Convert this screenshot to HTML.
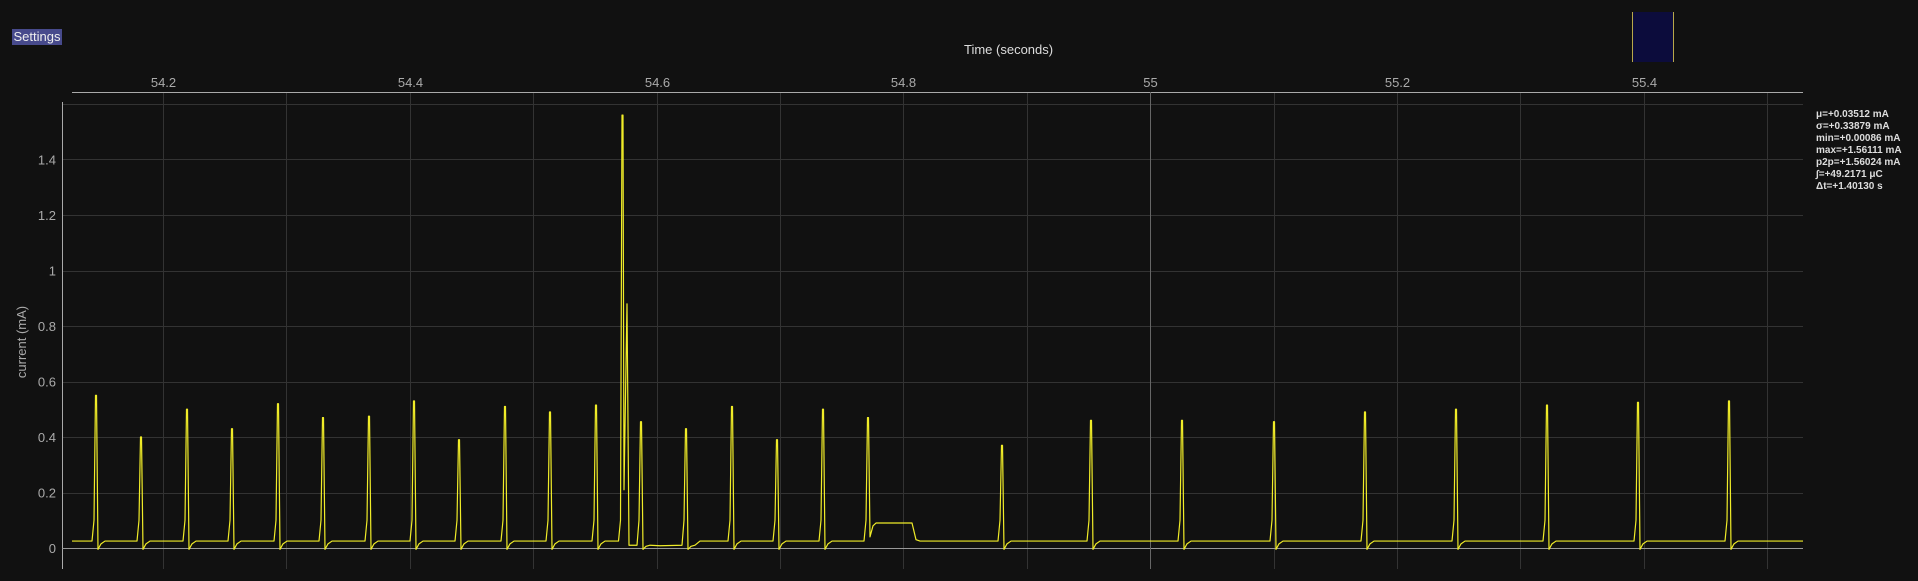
<!DOCTYPE html>
<html><head><meta charset="utf-8"><style>
html,body{margin:0;padding:0;background:#111;width:1918px;height:581px;overflow:hidden;font-family:"Liberation Sans",sans-serif}
.t{position:absolute;color:#bbb;font-size:13px}
</style></head><body>
<div style="position:absolute;left:12px;top:29px;width:50px;height:16px;background:#474a8c;color:#eee;font-size:13px;line-height:16px;text-align:center">Settings</div>
<div style="position:absolute;left:1632px;top:12px;width:40px;height:50px;background:#0c0c3c;border-left:1px solid #b8a84a;border-right:1px solid #b8a84a"></div>
<div class="t" style="left:964px;top:42px;color:#ddd">Time (seconds)</div>
<svg id="s" width="1918" height="581" style="position:absolute;left:0;top:0" xmlns="http://www.w3.org/2000/svg" font-family="Liberation Sans, sans-serif">
<g id="grid" stroke="#333" stroke-width="1"></g>
<line x1="72" y1="92.5" x2="1803" y2="92.5" stroke="#aaa"/>
<line x1="62.5" y1="102" x2="62.5" y2="569" stroke="#aaa"/>
<line x1="62" y1="548.5" x2="1803" y2="548.5" stroke="#999"/>
<line x1="1150.5" y1="92" x2="1150.5" y2="569" stroke="#666"/>
<g id="lab" fill="#aaa" font-size="13"></g>
<text transform="translate(26,342) rotate(-90)" text-anchor="middle" fill="#aaa" font-size="13">current (mA)</text>
<path id="p" fill="none" stroke="#f0ec28" stroke-width="1.2" stroke-linejoin="round"/>
<g fill="#ddd" font-size="10" font-weight="bold">
<text x="1816" y="117">μ=+0.03512 mA</text>
<text x="1816" y="129">σ=+0.33879 mA</text>
<text x="1816" y="141">min=+0.00086 mA</text>
<text x="1816" y="153">max=+1.56111 mA</text>
<text x="1816" y="165">p2p=+1.56024 mA</text>
<text x="1816" y="177">∫=+49.2171 μC</text>
<text x="1816" y="189">Δt=+1.40130  s</text>
</g>
</svg>
<script>
var NS="http://www.w3.org/2000/svg";
function el(p,t,a,txt){var e=document.createElementNS(NS,t);for(var k in a)e.setAttribute(k,a[k]);if(txt)e.textContent=txt;p.appendChild(e);}
var g=document.getElementById('grid'),l=document.getElementById('lab');
function Y(v){return 548-277.5*v;}
for(var i=0;i<=8;i++){var y=Math.round(Y(i*0.2))+0.5;if(i>0)el(g,'line',{x1:62,y1:y,x2:1803,y2:y});
 if(i<8){var s=i==0?'0':(i*0.2).toFixed(1).replace(/\.0$/,'');el(l,'text',{x:56,y:Y(i*0.2)+5,'text-anchor':'end'},s);}}
for(var i=0;i<14;i++){var x=Math.round(163+i*123.4)+0.5;el(g,'line',{x1:x,y1:92,x2:x,y2:569});
 if(i%2==0){var v=(54.2+i*0.1);var s=Math.abs(v-55)<1e-6?'55':v.toFixed(1);el(l,'text',{x:x,y:87,'text-anchor':'middle'},s);}}
var sp=[[96,.55],[141,.40],[187,.50],[232,.43],[278,.52],[323,.47],[369,.475],[414,.53],[459,.39],[505,.51],[550,.49],[596,.515],[622.5,1.56],[627,.88],[641,.455],[686,.43],[732,.51],[777,.39],[823,.50],[868,.47],[1002,.37],[1091,.46],[1182,.46],[1274,.455],[1365,.49],[1456,.50],[1547,.515],[1638,.525],[1729,.53]];
var d='M72 '+Y(.025);
for(var k=0;k<sp.length;k++){var x=sp[k][0],h=sp[k][1];
 var base=(x>628&&x<690)?.01:.025;
 if(x==627){d+=' L624 '+Y(.21)+' L'+x+' '+Y(h)+' L629 '+Y(.01);continue;}
 d+=' L'+(x-4)+' '+Y(base)+' L'+(x-2)+' '+Y(.1)+' L'+(x-0.5)+' '+Y(h)+' L'+(x+0.5)+' '+Y(h);
 if(x==622.5)continue;
 if(x==868){d+=' L870 '+Y(.04)+' L873 '+Y(.08)+' L876 '+Y(.09)+' L912 '+Y(.09)+' L916 '+Y(.03)+' L920 '+Y(.025);continue;}
 d+=' L'+(x+2)+' '+Y(-.005)+' L'+(x+5)+' '+Y(base*.6)+' L'+(x+9)+' '+Y(base);
 if(x==641){d+=' L660 '+Y(.008);}
 if(x==686){d+=' L700 '+Y(.025);}
}
d+=' L1803 '+Y(.025);
document.getElementById('p').setAttribute('d',d);
</script>
</body></html>
